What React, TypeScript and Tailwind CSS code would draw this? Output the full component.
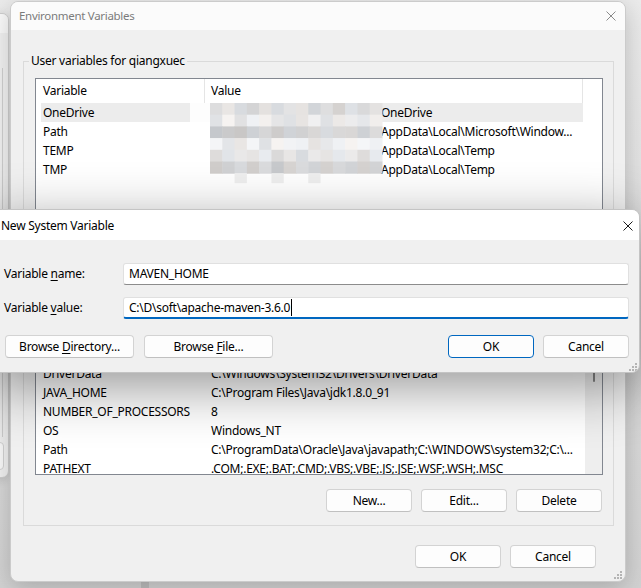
import React from "react";

function CloseX({ dark }: { dark?: boolean }) {
  return (
    <svg width="10" height="10" viewBox="0 0 10 10">
      <path d="M0.5 0.5 L9.5 9.5 M9.5 0.5 L0.5 9.5" stroke={dark ? "#1a1a1a" : "#8a8a8a"} strokeWidth="1" fill="none" />
    </svg>
  );
}

function Grip() {
  return (
    <svg width="8" height="8" viewBox="0 0 8 8" fill="#b4b4b4">
      <rect x="6" y="0" width="2" height="2" />
      <rect x="3" y="3" width="2" height="2" />
      <rect x="6" y="3" width="2" height="2" />
      <rect x="0" y="6" width="2" height="2" />
      <rect x="3" y="6" width="2" height="2" />
      <rect x="6" y="6" width="2" height="2" />
    </svg>
  );
}

function Btn({ children, className, primary }: { children: React.ReactNode; className: string; primary?: boolean }) {
  return (
    <button
      type="button"
      className={
        "flex h-[23px] items-center justify-center rounded-[4px] border bg-[#fdfdfd] text-[12px] leading-none tracking-[-0.25px] text-black " +
        (primary ? "border-[#0067c0] " : "border-[#d3d3d3] border-b-[#c0c0c0] ") +
        className
      }
    >
      {children}
    </button>
  );
}

const rowBase = [220, 233, 209, 236, 226, 210];

function Mosaic() {
  const cols = 14;
  const cw = 172 / cols;
  const rh = 11.7;
  const cells: React.ReactNode[] = [];
  for (let r = 0; r < 6; r++) {
    for (let c = 0; c < cols; c++) {
      let s = Math.sin((r * 31 + c * 7 + 3) * 12.9898) * 43758.5453;
      s = s - Math.floor(s);
      const v = Math.round(rowBase[r] + (s - 0.5) * 22);
      const t = Math.round(Math.sin(r * 5.3 + c * 2.1) * 3);
      cells.push(
        <rect key={r + "-" + c} x={20 + c * cw} y={r * rh} width={cw + 0.5} height={rh + 0.5} fill={`rgb(${v + t},${v},${v + 1 - t})`} />
      );
    }
  }
  const extra = [2, 5, 8];
  extra.forEach((c) =>
    cells.push(<rect key={"e" + c} x={20 + c * cw} y={6 * rh} width={cw} height={10} fill="#efefef" />)
  );
  return (
    <svg width="193" height="82" viewBox="0 0 193 82" className="absolute left-[154px] top-[24px]">
      <rect x="0" y="0" width="22" height="20" fill="#ffffff" opacity="0.9" />
      {cells}
    </svg>
  );
}

type Row = [string, string];

function ListHeader() {
  return (
    <div className="flex h-[24px] shrink-0">
      <div className="flex w-[169px] items-center border-r border-[#e5e5e5] pl-[7px]">Variable</div>
      <div className="flex w-[378px] items-center border-r border-[#e5e5e5] pl-[6px]">Value</div>
    </div>
  );
}

function ListRow({ row, selected, valueOffset }: { row: Row; selected?: boolean; valueOffset?: boolean }) {
  return (
    <div className={"ml-[5px] flex h-[19px] w-[542px] shrink-0 items-center " + (selected ? "bg-[#ececec]" : "")}>
      <div className="w-[163px] whitespace-nowrap pl-[2px]">{row[0]}</div>
      <div className={"flex-1 overflow-hidden whitespace-nowrap " + (valueOffset ? "pl-[177px]" : "pl-[7px]")}>{row[1]}</div>
    </div>
  );
}

const userRows: Row[] = [
  ["OneDrive", "OneDrive"],
  ["Path", "AppData\\Local\\Microsoft\\Window..."],
  ["TEMP", "AppData\\Local\\Temp"],
  ["TMP", "AppData\\Local\\Temp"],
];

const sysRows: Row[] = [
  ["ComSpec", "C:\\WINDOWS\\system32\\cmd.exe"],
  ["DriverData", "C:\\Windows\\System32\\Drivers\\DriverData"],
  ["JAVA_HOME", "C:\\Program Files\\Java\\jdk1.8.0_91"],
  ["NUMBER_OF_PROCESSORS", "8"],
  ["OS", "Windows_NT"],
  ["Path", "C:\\ProgramData\\Oracle\\Java\\javapath;C:\\WINDOWS\\system32;C:\\..."],
  ["PATHEXT", ".COM;.EXE;.BAT;.CMD;.VBS;.VBE;.JS;.JSE;.WSF;.WSH;.MSC"],
];

export default function App() {
  return (
    <div className="relative h-[588px] w-[641px] overflow-hidden bg-linear-to-b from-[#ebebeb] to-[#d2d2d2] font-['Noto_Sans',sans-serif] text-[12px] tracking-[-0.25px] text-black">
      {/* window behind, at the left edge */}
      <div className="absolute left-[-200px] top-[13px] flex h-[465px] w-[209px] flex-col overflow-hidden rounded-[7px] border border-[#cdcdcd] bg-[#f0f0f0] shadow-[0_2px_10px_rgba(0,0,0,0.12)]">
        <div className="h-[19px] shrink-0 bg-[#f9f9f9]" />
        <div className="ml-auto mr-[5px] mt-[35px] h-[369px] w-[40px] border-r border-[#cfcfcf]" />
        <div className="ml-auto mr-[4px] mt-[5px] h-[28px] w-[40px] rounded-[4px] border border-[#d2d2d2] bg-[#f8f8f8]" />
      </div>

      {/* sliver of another window below */}
      <div className="absolute left-[141px] top-[580px] h-[10px] w-[8px] bg-[#bdbdbd]" />

      {/* Environment Variables window */}
      <div className="absolute left-[10px] top-[1px] flex h-[581px] w-[616px] flex-col overflow-hidden rounded-[8px] border border-[#cbcbcb] bg-[#f0f0f0] shadow-[0_6px_24px_rgba(0,0,0,0.2)]">
        <div className="flex h-[28px] shrink-0 items-center justify-between bg-[#fbfbfb] pl-[8px] pr-[9px]">
          <span className="text-[11.5px] tracking-[-0.3px] text-[#7b7b7b]">Environment Variables</span>
          <CloseX />
        </div>
        <div className="flex flex-1 flex-col pt-[23px]">
          <fieldset className="ml-[12px] mr-[11px] flex flex-col border border-[#dadada] pb-[4px] pl-[11px] pr-[10px]">
            <legend className="ml-[-6px] px-[2px] leading-[16px]">User variables for qiangxuec</legend>
            <div className="relative mt-[9px] flex h-[168px] w-[568px] flex-col overflow-hidden border border-[#828790] bg-white">
              <ListHeader />
              {userRows.map((r, i) => (
                <ListRow key={i} row={r} selected={i === 0} valueOffset />
              ))}
              <Mosaic />
            </div>
            <div className="mr-[1px] mt-[13px] flex justify-end gap-[9px]">
              <Btn className="w-[86px]">New...</Btn>
              <Btn className="w-[86px]">Edit...</Btn>
              <Btn className="w-[86px]">Delete</Btn>
            </div>
          </fieldset>

          <fieldset className="ml-[12px] mr-[11px] mt-[8px] flex flex-col border border-[#dadada] pb-[13px] pl-[11px] pr-[10px]">
            <legend className="ml-[-6px] px-[2px] leading-[16px]">System variables</legend>
            <div className="mt-[9px] flex h-[155px] w-[568px] overflow-hidden border border-[#828790] bg-white">
              <div className="flex w-[549px] flex-col">
                <ListHeader />
                {sysRows.map((r, i) => (
                  <ListRow key={i} row={r} />
                ))}
              </div>
              <div className="flex flex-1 justify-center bg-[#eeeeee] pt-[51px]">
                <div className="h-[10px] w-[2px] rounded-full bg-[#858585]" />
              </div>
            </div>
            <div className="mr-[1px] mt-[14px] flex justify-end gap-[9px]">
              <Btn className="w-[86px]">New...</Btn>
              <Btn className="w-[86px]">Edit...</Btn>
              <Btn className="w-[86px]">Delete</Btn>
            </div>
          </fieldset>

          <div className="mr-[29px] mt-[19px] flex justify-end gap-[9px]">
            <Btn className="w-[86px]">OK</Btn>
            <Btn className="w-[86px]">Cancel</Btn>
          </div>
        </div>
        <div className="absolute bottom-[2px] right-[3px]">
          <Grip />
        </div>
      </div>

      {/* New System Variable dialog */}
      <div className="absolute left-[-10px] top-[209px] flex h-[164px] w-[650px] flex-col overflow-hidden rounded-[8px] border border-[#c4c4c4] bg-[#f0f0f0] shadow-[0_14px_55px_rgba(0,0,0,0.42)]">
        <div className="flex h-[30px] shrink-0 items-center justify-between bg-white pl-[10px] pr-[6px] pt-[1px]">
          <span>New System Variable</span>
          <CloseX dark />
        </div>
        <div className="flex flex-col pl-[13px] pr-[10px] pt-[23px]">
          <div className="flex h-[22px] items-center">
            <div className="w-[119px] whitespace-nowrap">
              Variable <span className="underline underline-offset-2">n</span>ame:
            </div>
            <div className="flex h-[22px] flex-1 items-center rounded-[3px] border border-[#e0e0e0] border-b-[#8c8c8c] bg-white pl-[5px]">
              MAVEN_HOME
            </div>
          </div>
          <div className="mt-[12px] flex h-[22px] items-center">
            <div className="w-[119px] whitespace-nowrap">
              Variable <span className="underline underline-offset-2">v</span>alue:
            </div>
            <div className="flex h-[22px] flex-1 items-center rounded-[3px] border border-[#e0e0e0] border-b-2 border-b-[#0067c0] bg-white pl-[5px]">
              <span>{"C:\\D\\soft\\apache-maven-3.6.0"}</span>
              <span className="ml-[1px] h-[17px] w-px bg-black" />
            </div>
          </div>
          <div className="mt-[16px] flex items-center">
            <Btn className="ml-[1px] w-[129px]">
              <span>
                Browse <span className="underline underline-offset-2">D</span>irectory...
              </span>
            </Btn>
            <Btn className="ml-[10px] w-[129px]">
              <span>
                Browse <span className="underline underline-offset-2">F</span>ile...
              </span>
            </Btn>
            <div className="flex-1" />
            <Btn className="w-[86px]" primary>
              OK
            </Btn>
            <Btn className="ml-[9px] w-[86px]">Cancel</Btn>
          </div>
        </div>
        <div className="absolute bottom-[1px] right-[2px]">
          <Grip />
        </div>
      </div>
    </div>
  );
}
